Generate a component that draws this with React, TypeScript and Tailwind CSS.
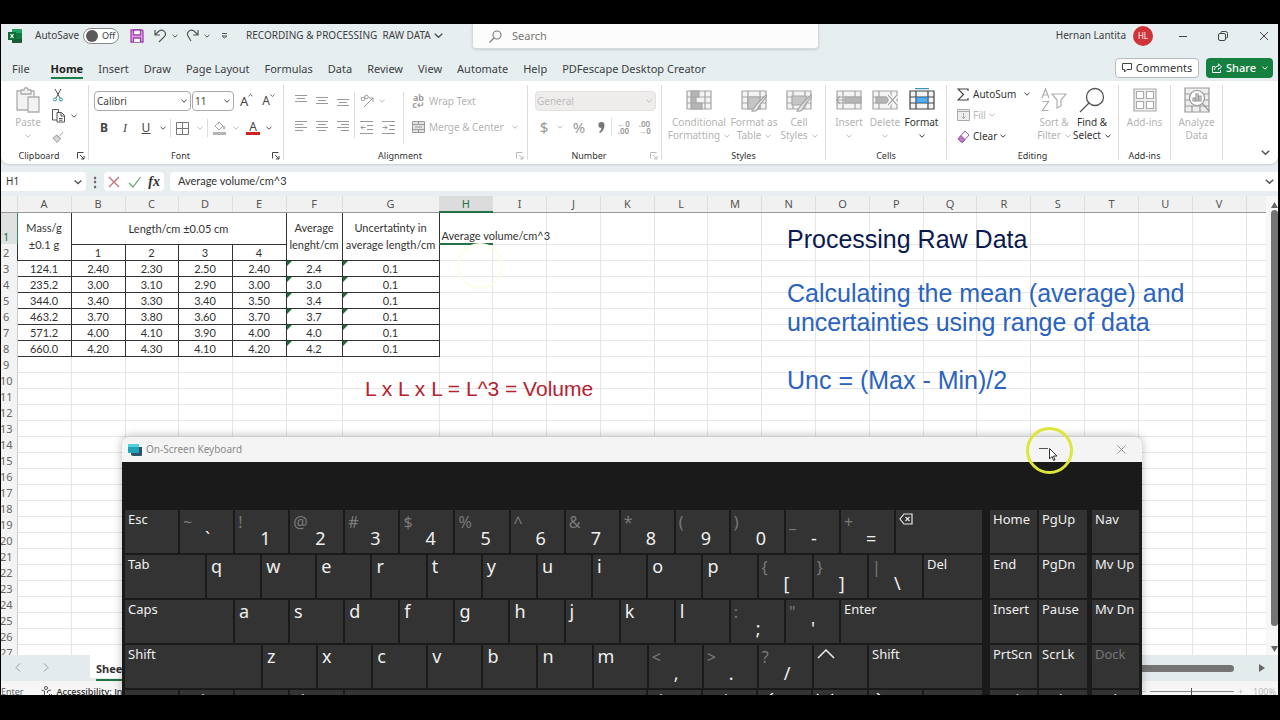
import { useState, type ReactNode } from 'react';
import { clsx } from 'clsx';

// Menu and sheet data
const tabs = ['File', 'Home', 'Insert', 'Draw', 'Page Layout', 'Formulas', 'Data', 'Review', 'View', 'Automate', 'Help', 'PDFescape Desktop Creator'];

const columns = [
  { id: 'A', width: 'w-[54px]' },
  { id: 'B', width: 'w-[54px]' },
  { id: 'C', width: 'w-[53px]' },
  { id: 'D', width: 'w-[54px]' },
  { id: 'E', width: 'w-[54px]' },
  { id: 'F', width: 'w-[56px]' },
  { id: 'G', width: 'w-[97px]' },
  ...'HIJKLMNOPQRSTUV'.split('').map(id => ({ id, width: '' })),
];

const measurements = [
  ['124.1', '2.40', '2.30', '2.50', '2.40', '2.4', '0.1'],
  ['235.2', '3.00', '3.10', '2.90', '3.00', '3.0', '0.1'],
  ['344.0', '3.40', '3.30', '3.40', '3.50', '3.4', '0.1'],
  ['463.2', '3.70', '3.80', '3.60', '3.70', '3.7', '0.1'],
  ['571.2', '4.00', '4.10', '3.90', '4.00', '4.0', '0.1'],
  ['660.0', '4.20', '4.30', '4.10', '4.20', '4.2', '0.1'],
];

const freeColumns = columns.slice(7);
const emptyRows = Array.from({ length: 19 }, (_, i) => i + 9);

// Keyboard data
type KeyDef = { main?: string; shift?: string; label?: string; icon?: ReactNode; width?: string; dim?: boolean; name?: string };

const letters = (text: string): KeyDef[] => text.split('').map(main => ({ main }));

const ArrowIcon = ({ d }: { d: string }) => (
  <svg width="18" height="12" viewBox="0 0 18 12" fill="none" stroke="#f0f0f0" strokeWidth="1.5">
    <path d={d} />
  </svg>
);

const BackspaceIcon = () => (
  <svg width="14" height="12" viewBox="0 0 14 12" fill="none" stroke="#e8e8e8" strokeWidth="1.2">
    <path d="M5 1h8v10H5L1 6zM6.5 4l4 4M10.5 4l-4 4" />
  </svg>
);

const keyRows: KeyDef[][] = [
  [
    { label: 'Esc' },
    { shift: '~', main: '`' },
    { shift: '!', main: '1' },
    { shift: '@', main: '2' },
    { shift: '#', main: '3' },
    { shift: '$', main: '4' },
    { shift: '%', main: '5' },
    { shift: '^', main: '6' },
    { shift: '&', main: '7' },
    { shift: '*', main: '8' },
    { shift: '(', main: '9' },
    { shift: ')', main: '0' },
    { shift: '_', main: '-' },
    { shift: '+', main: '=' },
    { icon: <BackspaceIcon />, name: 'Backspace', width: 'w-[86px]' },
  ],
  [
    { label: 'Tab', width: 'w-[80px]' },
    ...letters('qwertyuiop'),
    { shift: '{', main: '[' },
    { shift: '}', main: ']' },
    { shift: '|', main: '\\' },
    { label: 'Del', width: 'w-[58px]' },
  ],
  [
    { label: 'Caps', width: 'w-[108px]' },
    ...letters('asdfghjkl'),
    { shift: ':', main: ';' },
    { shift: '"', main: "'" },
    { label: 'Enter', width: 'w-[141px]' },
  ],
  [
    { label: 'Shift', width: 'w-[136px]' },
    ...letters('zxcvbnm'),
    { shift: '<', main: ',' },
    { shift: '>', main: '.' },
    { shift: '?', main: '/' },
    { icon: <ArrowIcon d="M1 10l8-8 8 8" />, name: 'Up' },
    { label: 'Shift', width: 'w-[113px]' },
  ],
  [
    { label: 'Fn', width: 'w-[53px]' },
    { label: 'Ctrl', width: 'w-[53px]' },
    { name: 'Windows', width: 'w-[53px]' },
    { label: 'Alt', width: 'w-[53px]' },
    { name: 'Space' },
    { label: 'Alt', width: 'w-[53px]' },
    { label: 'Ctrl', width: 'w-[53px]' },
    { icon: <ArrowIcon d="M12 0L5 6l7 6" />, name: 'Left', width: 'w-[53px]' },
    { icon: <ArrowIcon d="M1 1l8 8 8-8" />, name: 'Down', width: 'w-[54px]' },
    { icon: <ArrowIcon d="M5 0l7 6-7 6" />, name: 'Right', width: 'w-[53px]' },
    { name: 'Menu', width: 'w-[58px]' },
  ],
];

const sideRows = [
  ['Home', 'PgUp', 'Nav'],
  ['End', 'PgDn', 'Mv Up'],
  ['Insert', 'Pause', 'Mv Dn'],
  ['PrtScn', 'ScrLk', 'Dock'],
  ['Options', 'Help', 'Fade'],
];

// Small building blocks
function Chevron({ className = 'text-[#555]', size = 6 }: { className?: string; size?: number }) {
  return (
    <svg className={clsx('shrink-0', className)} width={size} height={size} viewBox="0 0 6 6" fill="none" stroke="currentColor">
      <path d="M0.5 1.8L3 4.2L5.5 1.8" />
    </svg>
  );
}

function IconButton({ name, className, children }: { name: string; className?: string; children?: ReactNode }) {
  return (
    <button type="button" aria-label={name} className={clsx('flex h-[18px] shrink-0 items-center justify-center', className)}>
      {children}
    </button>
  );
}

function Group({ title, launcher, width, children }: { title?: string; launcher?: 'on' | 'off'; width: string; children: ReactNode }) {
  return (
    <>
      <section className={clsx('flex shrink-0 flex-col', width)}>
        <div className="flex h-[67px] pt-[3px]">{children}</div>
        <div className="flex h-4 items-center">
          <span className="flex-1 text-center text-[9px] leading-3 whitespace-nowrap text-[#333]">{title}</span>
          {launcher && (
            <button type="button" aria-label={`${title} settings`} className={clsx('w-[11px]', launcher === 'on' ? 'text-[#444]' : 'text-[#bbb]')}>
              <svg width="8" height="8" viewBox="0 0 8 8" fill="none" stroke="currentColor">
                <path d="M0.5 6.5V0.5H6.5M3 3l4 4M7 4v3H4" />
              </svg>
            </button>
          )}
        </div>
      </section>
      <div className="my-1 w-px shrink-0 bg-[#dcdcdc]" />
    </>
  );
}

function BigButton({ lines, chevron, active, width, children }: { lines: string[]; chevron?: boolean; active?: boolean; width: string; children: ReactNode }) {
  return (
    <button type="button" className={clsx('flex shrink-0 flex-col items-center pt-[2px] text-[10px] leading-[13px]', width, active ? 'text-[#333]' : 'text-[#b4b4b4]')}>
      <span className="flex h-7 items-center justify-center">{children}</span>
      <span className="pt-[2px] whitespace-nowrap">{lines[0]}</span>
      <span className="flex h-[13px] items-center gap-1 whitespace-nowrap">
        {lines[1]}
        {chevron && <Chevron className={active ? 'text-[#333]' : 'text-[#bbb]'} />}
      </span>
    </button>
  );
}

function Lines({ rows, y = 0 }: { rows: number[][]; y?: number }) {
  return (
    <svg width="12" height="14" viewBox="0 0 12 14" stroke="#9a9a9a">
      {rows.map(([from, to], i) => (
        <path key={i} d={`M${from} ${y + i * 3 + 0.5}H${to}`} />
      ))}
    </svg>
  );
}

function GridIcon({ children, stroke = '#a5a5a5' }: { children?: ReactNode; stroke?: string }) {
  return (
    <svg width="26" height="24" viewBox="0 0 26 24" fill="none" stroke={stroke} strokeWidth="1.2">
      <path fill="#f3f3f3" d="M1 3H25V21H1z" />
      <path d="M1 9H25M1 15H25M7 3V21M19 3V21" />
      {children}
    </svg>
  );
}

function TitleBar() {
  const [autoSave, setAutoSave] = useState(false);

  return (
    <div className="flex h-[23px] shrink-0 items-center text-[11px] text-[#3c4043]">
      <div className="flex w-[471px] shrink-0 items-center pl-[7px]">
        <svg width="14" height="14" viewBox="0 0 14 14">
          <path fill="#21a366" d="M4 0h9a1 1 0 011 1v12a1 1 0 01-1 1H4z" />
          <path fill="#107c41" d="M4 4h10v6H4z" />
          <path fill="#185c37" d="M4 10h10v3a1 1 0 01-1 1H4z" />
          <path fill="#0f6b37" d="M0 3h8v8H0z" />
          <path stroke="#fff" strokeWidth="1.2" d="M2.5 5l3 4M5.5 5l-3 4" />
        </svg>
        <label className="ml-[13px] flex items-center gap-[4px] text-[10px]">
          AutoSave
          <input type="checkbox" className="sr-only" checked={autoSave} onChange={e => setAutoSave(e.target.checked)} />
          <span className="flex h-4 w-9 items-center gap-1 rounded-full border border-[#888] bg-white pl-[2px] text-[9px]">
            <span className="size-3 rounded-full bg-[#5a5a5a]" />
            {autoSave ? 'On' : 'Off'}
          </span>
        </label>
        <IconButton name="Save" className="ml-[11px]">
          <svg width="14" height="14" viewBox="0 0 14 14" fill="none" stroke="#a13fae" strokeWidth="1.3">
            <path fill="#dba5e2" d="M1 1h11l1 1v11H1z" />
            <path fill="#fff" d="M3.500 1h7v5h-7zM3.500 13V9h7v4" />
          </svg>
        </IconButton>
        <IconButton name="Undo" className="ml-[10px] gap-[5px]">
          <svg width="13" height="14" viewBox="0 0 13 14" fill="none" stroke="#555" strokeWidth="1.200">
            <path d="M1 1v5h5M1 6l4-4a4 4 0 016 5l-6 6" />
          </svg>
          <Chevron />
        </IconButton>
        <IconButton name="Redo" className="ml-[8px] gap-[5px]">
          <svg width="13" height="14" viewBox="0 0 13 14" fill="none" stroke="#555" strokeWidth="1.200">
            <path d="M12 1v5H7M12 6L8 2a4 4 0 00-6 5l3 5" />
          </svg>
          <Chevron />
        </IconButton>
        <IconButton name="Customize toolbar" className="ml-[11px]">
          <svg width="7" height="7" viewBox="0 0 7 7" fill="none" stroke="#555">
            <path d="M1 1.500h5M1 4l2.500 2L6 4z" />
          </svg>
        </IconButton>
        <button type="button" className="ml-[18px] flex items-center gap-[3px] text-[10px] whitespace-pre">
          RECORDING &amp; PROCESSING  RAW DATA
          <Chevron size={9} />
        </button>
      </div>
      <label className="flex h-[25px] flex-1 items-center gap-[10px] self-start rounded-b border border-t-0 border-[#d5dadb] bg-[#fdfcfd] pl-4 shadow-sm">
        <svg width="13" height="13" viewBox="0 0 13 13" fill="none" stroke="#777" strokeWidth="1.100">
          <circle cx="8" cy="5" r="4" />
          <path d="M5 8l-4.500 4.500" />
        </svg>
        <input type="text" placeholder="Search" aria-label="Search" className="min-w-0 flex-1 bg-transparent text-[11px] outline-none placeholder:text-[#777]" />
      </label>
      <div className="flex w-[459px] shrink-0 items-center justify-end pr-[9px]">
        <span className="text-[10px]">Hernan Lantita</span>
        <span className="ml-[7px] flex size-5 items-center justify-center rounded-full bg-[#cf3438] text-[8px] text-white">HL</span>
        <IconButton name="Minimize" className="ml-[25px]">
          <svg width="10" height="10" viewBox="0 0 10 10" stroke="#444"><path d="M1 5.500h8" /></svg>
        </IconButton>
        <IconButton name="Restore" className="ml-[30px]">
          <svg width="10" height="10" viewBox="0 0 10 10" fill="none" stroke="#444">
            <path d="M3 2.500V1.500a1 1 0 011-1h3.500a2 2 0 012 2V6a1 1 0 01-1 1H8" />
            <rect x="0.500" y="2.500" width="7" height="7" rx="1.500" />
          </svg>
        </IconButton>
        <IconButton name="Close" className="ml-[31px]">
          <svg width="10" height="10" viewBox="0 0 10 10" stroke="#444"><path d="M1 1l8 8M9 1L1 9" /></svg>
        </IconButton>
      </div>
    </div>
  );
}

function TabRow() {
  const [activeTab, setActiveTab] = useState('Home');

  return (
    <div className="flex h-[34px] shrink-0 items-start justify-between pt-[11px] pl-[11px]">
      <nav className="flex gap-[15px] text-[11px] text-[#3c4043]">
        {tabs.map(tab => (
          <button
            key={tab}
            type="button"
            onClick={() => setActiveTab(tab)}
            className={clsx(
              'h-[21px] border-b-2 pt-[2px] leading-[17px] whitespace-nowrap first:mr-[6px]',
              tab === activeTab ? 'border-[#1a7f46] font-bold text-[#222]' : 'border-transparent',
            )}
          >
            {tab}
          </button>
        ))}
      </nav>
      <div className="flex gap-[7px] pr-[5px] text-[11px]">
        <button type="button" className="flex h-5 w-[84px] items-center justify-center gap-1 rounded border border-[#bbb] bg-white text-[#333]">
          <svg width="10" height="10" viewBox="0 0 10 10" fill="none" stroke="#444">
            <path d="M0.500 0.500h9v6H5L2.500 9V6.500h-2z" />
          </svg>
          Comments
        </button>
        <button type="button" className="flex h-5 w-[67px] items-center gap-1 rounded bg-[#15803f] pl-[6px] text-white">
          <svg width="10" height="10" viewBox="0 0 10 10" fill="none" stroke="#fff">
            <path d="M3 3.500H0.500v6h8V7M2.500 7c0-3 2-4 4-4V0.800L9.500 4 6.500 6.500V5" />
          </svg>
          <span className="flex-1 text-left font-medium">Share</span>
          <Chevron className="mr-[5px] text-white" />
        </button>
      </div>
    </div>
  );
}

function ClipboardGroup() {
  return (
    <Group title="Clipboard" launcher="on" width="w-[87px]">
      <BigButton lines={['Paste', '']} chevron width="w-[54px]">
        <svg width="24" height="26" viewBox="0 0 24 26" fill="#f3f3f3" stroke="#adadad" strokeWidth="1.300">
          <path d="M1 4h17v19H1z" />
          <path d="M5 3h3c0-3 4-3 4 0h3v4H5z" />
          <path d="M12 10h11v15H12z" />
        </svg>
      </BigButton>
      <div className="-ml-[3px] flex flex-col gap-[3px] pt-[2px] text-[#666]">
        <IconButton name="Cut" className="w-3">
          <svg width="10" height="14" viewBox="0 0 10 14" fill="none" stroke="#555">
            <path d="M2 1l5 9M8 1l-5 9" />
            <circle cx="2" cy="11.500" r="1.500" stroke="#2a9d9d" />
            <circle cx="8" cy="11.500" r="1.500" stroke="#2a9d9d" />
          </svg>
        </IconButton>
        <IconButton name="Copy" className="gap-[6px]">
          <svg width="13" height="14" viewBox="0 0 13 14" fill="#fff" stroke="#555">
            <path d="M5 11H0.500V0.500h6V3" />
            <path d="M5 3.500h4.500l3 3V13H5zM9 3.500V7h3.500M7 9.500h3.500M7 11.200h3.500" />
          </svg>
          <Chevron />
        </IconButton>
        <IconButton name="Format painter" className="w-3">
          <svg width="13" height="13" viewBox="0 0 13 13" fill="#d5d5d5" stroke="#999">
            <path d="M12 1L8 4.500M5 3.500l4.500 4.500M5 4L1 7l4.500 5L9 8z" />
          </svg>
        </IconButton>
      </div>
    </Group>
  );
}

function FontGroup() {
  return (
    <Group title="Font" launcher="on" width="w-[194px]">
      <div className="flex flex-1 flex-col gap-2 pt-[7px] pl-[5px] text-[#444]">
        <div className="flex items-center">
          <span className="relative flex">
            <select aria-label="Font name" className="h-5 w-[97px] appearance-none rounded border border-[#aaa] bg-white pl-[2px] text-[10px]">
              <option>Calibri</option>
            </select>
            <Chevron className="pointer-events-none absolute top-[7px] right-1 text-[#444]" />
          </span>
          <span className="relative ml-px flex">
            <select aria-label="Font size" className="h-5 w-[42px] appearance-none rounded border border-[#aaa] bg-white pl-[2px] text-[10px]">
              <option>11</option>
            </select>
            <Chevron className="pointer-events-none absolute top-[7px] right-1 text-[#444]" />
          </span>
          <button type="button" className="ml-[6px] flex text-[13px] leading-4" aria-label="Grow font">
            A<svg width="5" height="5" viewBox="0 0 6 6" fill="none" stroke="#444"><path d="M0.500 4L3 1.500 5.500 4" /></svg>
          </button>
          <button type="button" className="ml-[9px] flex text-[12px] leading-4" aria-label="Shrink font">
            A<Chevron size={5} />
          </button>
        </div>
        <div className="flex items-center text-[12px]">
          <IconButton name="Bold" className="w-5 font-bold">B</IconButton>
          <IconButton name="Italic" className="w-[22px] font-['Liberation_Serif',serif] italic">I</IconButton>
          <IconButton name="Underline" className="w-5 underline">U</IconButton>
          <IconButton name="Underline style" className="w-[14px]"><Chevron /></IconButton>
          <div className="h-[18px] w-px bg-[#ddd]" />
          <IconButton name="Borders" className="w-[22px]">
            <svg width="13" height="13" viewBox="0 0 13 13" fill="none" stroke="#777"><path d="M0.500 0.500h12v12H0.500zM6.500 0.500v12M0.500 6.500h12" /></svg>
          </IconButton>
          <IconButton name="Border style" className="w-[14px]"><Chevron className="text-[#bbb]" /></IconButton>
          <div className="h-[18px] w-px bg-[#ddd]" />
          <IconButton name="Fill color" className="w-[23px]">
            <svg width="13" height="14" viewBox="0 0 13 14" fill="none" stroke="#a5a5a5">
              <path d="M6 1l4 4-4 4-4-4zM6 1L5 3M11 5c1.500 2 1 3 0 3s-1-1 0-3" />
              <path fill="#b5b5b5" stroke="none" d="M0 11h13v3H0z" />
            </svg>
          </IconButton>
          <IconButton name="Fill color menu" className="w-[9px]"><Chevron className="text-[#bbb]" /></IconButton>
          <IconButton name="Font color" className="w-[26px] flex-col text-[12px] leading-[11px]">
            A
            <span className="h-[3px] w-[14px] bg-[#d02224]" />
          </IconButton>
          <IconButton name="Font color menu" className="w-[6px]"><Chevron /></IconButton>
        </div>
      </div>
    </Group>
  );
}

function AlignmentGroup() {
  return (
    <Group title="Alignment" launcher="off" width="w-[243px]">
      <div className="flex flex-1 gap-[5px] pt-2 pl-[11px] text-[10px] text-[#b4b4b4]">
        <div className="grid grid-cols-3 content-start gap-x-[9px] gap-y-2">
          <IconButton name="Top align"><Lines y={1} rows={[[0, 12], [2, 10], [0, 12]]} /></IconButton>
          <IconButton name="Middle align"><Lines y={3} rows={[[0, 12], [2, 10], [0, 12]]} /></IconButton>
          <IconButton name="Bottom align"><Lines y={5} rows={[[0, 12], [2, 10], [0, 12]]} /></IconButton>
          <IconButton name="Align left"><Lines y={1} rows={[[0, 12], [0, 8], [0, 12], [0, 8]]} /></IconButton>
          <IconButton name="Center"><Lines y={1} rows={[[0, 12], [2, 10], [0, 12], [2, 10]]} /></IconButton>
          <IconButton name="Align right"><Lines y={1} rows={[[0, 12], [4, 12], [0, 12], [4, 12]]} /></IconButton>
        </div>
        <div className="mb-[10px] w-px bg-[#ddd]" />
        <div className="flex w-[38px] flex-col gap-2">
          <IconButton name="Orientation" className="gap-1 self-start">
            <svg width="15" height="14" viewBox="0 0 15 14" fill="none" stroke="#9a9a9a">
              <path d="M4 13L13 4M13 8V4H9" />
              <circle cx="3" cy="5" r="1.800" />
              <circle cx="6.500" cy="3" r="1.800" />
            </svg>
            <Chevron className="text-[#bbb]" />
          </IconButton>
          <div className="flex gap-[9px]">
            <IconButton name="Decrease indent">
              <svg width="13" height="13" viewBox="0 0 13 13" fill="none" stroke="#9a9a9a"><path d="M0 0.500h13M7 4.500h6M7 8.500h6M0 12.500h13M5.500 6.500H1M3 4.500l-2 2 2 2" /></svg>
            </IconButton>
            <IconButton name="Increase indent">
              <svg width="13" height="13" viewBox="0 0 13 13" fill="none" stroke="#9a9a9a"><path d="M0 0.500h13M7 4.500h6M7 8.500h6M0 12.500h13M0.500 6.500H5M3 4.500l2 2-2 2" /></svg>
            </IconButton>
          </div>
        </div>
        <div className="mb-[4px] w-px bg-[#ddd]" />
        <div className="flex flex-col gap-2 pl-[3px]">
          <button type="button" className="flex h-[18px] items-center gap-1">
            <span className="w-[13px] text-[9px] leading-[7px] font-bold text-[#a0a0a0]">ab c↵</span>
            Wrap Text
          </button>
          <button type="button" className="flex h-[18px] items-center gap-1 whitespace-nowrap">
            <svg width="13" height="12" viewBox="0 0 13 12" fill="#e4e4e4" stroke="#9a9a9a"><path d="M0.500 0.500h12v11H0.500zM0.500 3.500h12M0.500 8.500h12M3 6h7M6.500 0v3.500M6.500 8.500V12" /></svg>
            Merge &amp; Center
            <Chevron className="ml-1 text-[#bbb]" />
          </button>
        </div>
      </div>
    </Group>
  );
}

function NumberGroup() {
  return (
    <Group title="Number" launcher="off" width="w-[133px]">
      <div className="flex flex-1 flex-col gap-[7px] pt-[7px] pl-[7px] text-[#999]">
        <span className="relative flex">
          <select disabled aria-label="Number format" className="h-5 w-[121px] appearance-none rounded border border-[#e4e0e0] bg-[#efecec] pl-[1px] text-[10px] text-[#bdbdbd] opacity-100">
            <option>General</option>
          </select>
          <Chevron className="pointer-events-none absolute top-[7px] right-[9px] text-[#bbb]" />
        </span>
        <div className="flex items-center text-[15px]">
          <IconButton name="Currency" className="w-[18px]">$</IconButton>
          <IconButton name="Currency menu" className="w-[14px]"><Chevron className="text-[#bbb]" /></IconButton>
          <IconButton name="Percent" className="w-6">%</IconButton>
          <IconButton name="Comma style" className="w-5">
            <svg width="7" height="11" viewBox="0 0 7 11" fill="#777"><path d="M3.500 0a3 3 0 013 3c0 4-2 6.500-4.500 8l-1-1c1.500-1 2.300-2.500 2.300-4A3 3 0 013.500 0" /></svg>
          </IconButton>
          <div className="h-[18px] w-px bg-[#ddd]" />
          <IconButton name="Increase decimal" className="w-[23px] text-[8px] leading-[7px] font-semibold">←0<br />.00</IconButton>
          <IconButton name="Decrease decimal" className="w-[19px] text-[8px] leading-[7px] font-semibold">.00<br />→0</IconButton>
        </div>
      </div>
    </Group>
  );
}

function StylesGroup() {
  return (
    <Group title="Styles" width="w-[163px]">
      <div className="flex flex-1 pl-[7px]">
        <BigButton lines={['Conditional', 'Formatting']} chevron width="w-[60px]">
          <GridIcon><path fill="#b5b5b5" d="M5 3h8v6H5zM5 9h5v6H5zM5 15h11v6H5z" /></GridIcon>
        </BigButton>
        <BigButton lines={['Format as', 'Table']} chevron width="w-[50px]">
          <GridIcon><path fill="#c5c5c5" d="M7 9h12v12H7z" /><path fill="#e8e8e8" d="M25 7l-9 9-5 7c4 1 6-1 7-5l8-10z" /></GridIcon>
        </BigButton>
        <BigButton lines={['Cell', 'Styles']} chevron width="w-[40px]">
          <GridIcon><path fill="#c5c5c5" d="M6 8h14v9H6z" /><path fill="#e8e8e8" d="M25 7l-9 9-5 7c4 1 6-1 7-5l8-10z" /></GridIcon>
        </BigButton>
      </div>
    </Group>
  );
}

function CellsGroup() {
  return (
    <Group title="Cells" width="w-[120px]">
      <div className="flex flex-1 pl-[5px]">
        <BigButton lines={['Insert', '']} chevron width="w-[36px]">
          <GridIcon><path fill="#b5b5b5" d="M9 9h16v6H9z" /><path d="M9 12H1M4 8.500L0.500 12 4 15.500" /></GridIcon>
        </BigButton>
        <BigButton lines={['Delete', '']} chevron width="w-[36px]">
          <GridIcon><path fill="#b5b5b5" d="M4 9h12v6H4z" /><path stroke="#fff" strokeWidth="4" d="M16 7l9 10M25 7l-9 10" /><path d="M16 7l9 10M25 7l-9 10" /></GridIcon>
        </BigButton>
        <BigButton lines={['Format', '']} chevron active width="w-[37px]">
          <GridIcon stroke="#444"><path fill="#5aaee8" stroke="#2b88d8" d="M7.500 9.500h11v5h-11z" /><path stroke="#3a94b8" d="M6 0.600h14" /></GridIcon>
        </BigButton>
      </div>
    </Group>
  );
}

function EditingGroup() {
  return (
    <Group title="Editing" width="w-[171px]">
      <div className="flex flex-1 pl-[10px]">
        <div className="flex w-[79px] flex-col gap-[3px] pt-px text-[10px] text-[#333]">
          <button type="button" className="flex h-[18px] items-center gap-[3px]">
            <svg width="13" height="13" viewBox="0 0 13 13" fill="none" stroke="#444" strokeWidth="1.200"><path d="M11 3V1H1l5.500 5.500L1 12h10v-2" /></svg>
            AutoSum
            <Chevron className="ml-[5px] text-[#444]" />
          </button>
          <button type="button" className="flex h-[18px] items-center gap-[3px] text-[#bbb]">
            <svg width="13" height="12" viewBox="0 0 13 12" fill="#eee" stroke="#aaa"><path d="M0.500 0.500h12v11H0.500zM0.500 2.500h12M6.500 4v5M4.500 7.500l2 2 2-2" /></svg>
            Fill
            <Chevron className="text-[#bbb]" />
          </button>
          <button type="button" className="flex h-[18px] items-center gap-[3px]">
            <svg width="13" height="13" viewBox="0 0 13 13" fill="#fff" stroke="#9b59a8"><path d="M8 1l4 4-6 7H4L1 9z" /><path fill="#b77fc2" d="M4 5.500L1 9l3 3h2l2-2.500z" /></svg>
            Clear
            <Chevron className="text-[#444]" />
          </button>
        </div>
        <BigButton lines={['Sort &', 'Filter']} chevron width="w-[36px]">
          <svg width="26" height="26" viewBox="0 0 26 26" fill="none" stroke="#b0b0b0" strokeWidth="1.200">
            <path d="M1 11L4.500 2 8 11M2.500 8h4M1.500 14.500h6l-6 9h6M11 7h14l-5 6v6l-4 2v-8z" />
          </svg>
        </BigButton>
        <BigButton lines={['Find &', 'Select']} chevron active width="w-[40px]">
          <svg width="26" height="26" viewBox="0 0 26 26" fill="none" stroke="#555" strokeWidth="1.300">
            <circle cx="16" cy="10" r="8.500" />
            <path d="M10 16l-9 9" />
          </svg>
        </BigButton>
      </div>
    </Group>
  );
}

function Ribbon() {
  return (
    <div className="flex h-[83px] shrink-0 rounded-b-lg bg-white shadow-[0_1px_2px_#c5cccd]">
      <ClipboardGroup />
      <FontGroup />
      <AlignmentGroup />
      <NumberGroup />
      <StylesGroup />
      <CellsGroup />
      <EditingGroup />
      <Group title="Add-ins" width="w-[51px]">
        <BigButton lines={['Add-ins']} width="w-full">
          <svg width="24" height="24" viewBox="0 0 24 24" fill="#fff" stroke="#aaa" strokeWidth="1.200">
            <path fill="#f0f0f0" d="M1 1h22v22H1z" />
            <path d="M3.500 3.500h7v7h-7zM13.500 3.500h7v7h-7zM3.500 13.500h7v7h-7zM13.500 13.500h7v7h-7z" />
          </svg>
        </BigButton>
      </Group>
      <Group width="w-[51px]">
        <BigButton lines={['Analyze', 'Data']} width="w-full">
          <svg width="26" height="26" viewBox="0 0 26 26" fill="#eee" stroke="#999" strokeWidth="1.200">
            <path d="M1 1h24v24H1zM1 7h24M1 19h24M8 19v6M16 19v6M1 13h24" />
            <circle cx="13" cy="11" r="7.500" fill="#fff" />
            <path d="M9 14v-3h2v3zM12 14V7h2v7zM15 14V9h2v5zM18.500 16.500L25 24" />
          </svg>
        </BigButton>
      </Group>
      <div className="flex flex-1 items-end justify-end pr-2 pb-[7px]">
        <button type="button" aria-label="Collapse ribbon"><Chevron size={9} /></button>
      </div>
    </div>
  );
}

function FormulaBar() {
  const [formula, setFormula] = useState('Average volume/cm^3');

  return (
    <div className="flex h-8 shrink-0 items-start pt-2 text-[10px] text-[#333]">
      <label className="flex h-[19px] w-[85px] items-center rounded-r bg-white pr-1 pl-[5px]">
        <input aria-label="Name box" defaultValue="H1" className="w-0 flex-1 bg-transparent outline-none" />
        <Chevron size={8} />
      </label>
      <span className="w-[18px] text-center text-[12px] leading-[19px] font-bold text-[#555]">⋮</span>
      <div className="flex h-[19px] w-[60px] items-center justify-between rounded bg-white px-1">
        <IconButton name="Cancel">
          <svg width="12" height="12" viewBox="0 0 12 12" stroke="#c66a78" strokeWidth="1.200"><path d="M1 1l10 10M11 1L1 11" /></svg>
        </IconButton>
        <IconButton name="Enter">
          <svg width="13" height="12" viewBox="0 0 13 12" fill="none" stroke="#6da36d" strokeWidth="1.200"><path d="M1 7l4 4 7.500-10" /></svg>
        </IconButton>
        <IconButton name="Insert function" className="font-['Liberation_Serif',serif] text-[14px] font-bold italic">fx</IconButton>
      </div>
      <label className="ml-[6px] flex h-[19px] flex-1 items-center rounded-l bg-white pr-1 pl-2">
        <input aria-label="Formula" value={formula} onChange={e => setFormula(e.target.value)} className="w-0 flex-1 bg-transparent font-['Lato',sans-serif] text-[11px] outline-none" />
        <Chevron size={9} />
      </label>
    </div>
  );
}

function RowHeader({ n, active }: { n: number; active?: boolean }) {
  return (
    <th
      scope="row"
      className={clsx(
        "border-r border-[#d0d0d0] pr-[5px] pl-0 align-bottom font-['Noto_Sans',sans-serif] text-[11px] leading-[15px] font-normal",
        active ? 'border-r-[#3f7f62] bg-[#dfe1e1] text-[#217346]' : 'bg-[#f3f3f3] text-[#666]',
      )}
    >
      <span className="flex justify-center">{n}</span>
    </th>
  );
}

function EmptyCells({ from = 0 }: { from?: number }) {
  return (
    <>
      {columns.slice(from).map(col => (
        <td key={col.id} className="border border-[#e6e6e6]" />
      ))}
      <td className="border border-r-0 border-[#e6e6e6]" />
    </>
  );
}

const inked = 'border border-[#333] text-center';

function Worksheet() {
  return (
    <div className="relative flex min-h-0 flex-1 bg-white">
      <div className="min-w-0 flex-1 overflow-hidden">
        <table className="w-full table-fixed border-collapse font-['Lato',sans-serif] text-[11px] leading-[15px] text-[#333]">
          <thead>
            <tr className="h-4 bg-[#f1f1f1] font-['Noto_Sans',sans-serif] text-[11px] text-[#555]">
              <th aria-label="Select all" className="w-4 border-b border-[#999] p-0" />
              {columns.map(col => (
                <th
                  key={col.id}
                  scope="col"
                  className={clsx('border-x border-b border-x-[#dedede] border-b-[#999] p-0 font-normal', col.width, col.id === 'H' && 'border-b-2 border-b-[#217346] bg-[#dcdcdc] text-[#217346]')}
                >
                  {col.id}
                </th>
              ))}
              <th className="w-5 border-b border-[#999] p-0" />
            </tr>
          </thead>
          <tbody>
            <tr className="h-8">
              <RowHeader n={1} active />
              <td rowSpan={2} className={clsx(inked, 'leading-[17px]')}>Mass/g<br />±0.1 g</td>
              <td colSpan={4} className={inked}>Length/cm ±0.05 cm</td>
              <td rowSpan={2} className={clsx(inked, 'leading-[17px] whitespace-nowrap')}>Average<br />lenght/cm</td>
              <td rowSpan={2} className={clsx(inked, 'leading-[17px] whitespace-nowrap')}>Uncertatinty in<br />average length/cm</td>
              <td className="border-b-2 border-b-[#217346] pl-[2px] align-bottom whitespace-nowrap">Average volume/cm^3</td>
              {freeColumns.slice(1).map(col => (
                <td key={col.id} className={clsx('border-b border-[#e6e6e6]', col.id !== 'I' && 'border-l')} />
              ))}
              <td className="border-b border-l border-[#e6e6e6]" />
            </tr>
            <tr className="h-4">
              <RowHeader n={2} />
              {[1, 2, 3, 4].map(n => (
                <td key={n} className={inked}>{n}</td>
              ))}
              <EmptyCells from={7} />
            </tr>
            {measurements.map((row, r) => (
              <tr key={r} className="h-4">
                <RowHeader n={r + 3} />
                {row.map((value, c) => (
                  <td key={c} className={clsx(inked, 'relative p-0')}>
                    {c > 4 && (
                      <svg className="absolute top-0 left-0" width="5" height="5" viewBox="0 0 5 5" fill="#1c6b3a"><path d="M0 0h5L0 5z" /></svg>
                    )}
                    {value}
                  </td>
                ))}
                <EmptyCells from={7} />
              </tr>
            ))}
            {emptyRows.map(n => (
              <tr key={n} className="h-4">
                <RowHeader n={n} />
                <EmptyCells />
              </tr>
            ))}
          </tbody>
        </table>
      </div>

      {/* Vertical scroll bar */}
      <div className="flex w-3 shrink-0 flex-col items-end bg-[#f7f7f7]">
        <button type="button" aria-label="Scroll up" className="h-[14px] pt-1">
          <svg width="7" height="6" viewBox="0 0 7 6" fill="#666"><path d="M0 6L3.500 0 7 6z" /></svg>
        </button>
        <div className="w-[7px] flex-1 rounded-full bg-[#747474]" />
        <button type="button" aria-label="Scroll down" className="h-[29px] pt-[17px]">
          <svg width="7" height="6" viewBox="0 0 7 6" fill="#666"><path d="M0 0h7L3.500 6z" /></svg>
        </button>
      </div>

      {/* Text boxes floating over the cells */}
      <div className="absolute top-[29px] left-[786px] font-['Liberation_Sans',sans-serif] text-[25px] leading-[29px] whitespace-nowrap text-[#2a63c0]">
        <p className="text-[#0a1a4f]">Processing Raw Data</p>
        <p className="mt-[25px]">Calculating the mean (average) and<br />uncertainties using range of data</p>
        <p className="mt-[29px]">Unc = (Max - Min)/2</p>
      </div>
      <p className="absolute top-[181px] left-[364px] font-['Liberation_Sans',sans-serif] text-[21px] leading-6 whitespace-nowrap text-[#b52230]">
        L x L x L = L^3 = Volume
      </p>
      <div className="absolute top-[47px] left-[456px] size-[46px] rounded-full border-2 border-[#fdfdec]" />
    </div>
  );
}

function SheetBar() {
  return (
    <div className="flex h-[28px] shrink-0 items-start border-b-2 border-[#f4f4f4] bg-[#e3ebec]">
      <div className="flex h-[25px] w-[89px] items-center gap-[22px] pl-[14px] text-[#999]">
        <button type="button" aria-label="Previous sheet">
          <svg width="6" height="9" viewBox="0 0 6 9" fill="none" stroke="currentColor"><path d="M5 0.500l-4 4 4 4" /></svg>
        </button>
        <button type="button" aria-label="Next sheet">
          <svg width="6" height="9" viewBox="0 0 6 9" fill="none" stroke="currentColor"><path d="M1 0.500l4 4-4 4" /></svg>
        </button>
      </div>
      <div className="h-[23px] bg-white px-[6px]">
        <button type="button" className="h-[21px] border-b-2 border-[#217346] text-[11px] font-bold text-[#333]">Sheet1</button>
      </div>
      <div className="flex flex-1 items-center self-center pr-[13px] pl-[500px]">
        <div className="mr-[25px] h-[7px] flex-1 rounded-full bg-[#747474]" />
        <button type="button" aria-label="Scroll right">
          <svg width="6" height="8" viewBox="0 0 6 8" fill="#666"><path d="M0 0l6 4-6 4z" /></svg>
        </button>
      </div>
    </div>
  );
}

function StatusBar() {
  return (
    <div className="flex h-3 shrink-0 items-start justify-between overflow-hidden bg-[#f6f6f6] text-[9px] leading-[17px] text-[#555]">
      <div className="flex items-center">
        <span className="font-['Open_Sans',sans-serif]">Enter</span>
        <svg className="ml-[18px]" width="12" height="12" viewBox="0 0 12 12" fill="none" stroke="#555">
          <circle cx="5" cy="2" r="1.500" />
          <path d="M0.500 4l3 1v3l-1.500 3.500M10 4L6.500 5v2M8 8l3 3M11 8l-3 3" />
        </svg>
        <span className="ml-[3px] font-['Open_Sans',sans-serif] font-semibold text-[#333]">Accessibility: Investigate</span>
      </div>
      <div className="flex items-center gap-1 pr-[2px] text-[#bbb]">
        <button type="button" aria-label="Zoom out">−</button>
        <input
          type="range"
          aria-label="Zoom"
          min={10}
          max={190}
          defaultValue={100}
          className="h-px w-[84px] appearance-none bg-[#888] [&::-webkit-slider-thumb]:h-[7px] [&::-webkit-slider-thumb]:w-px [&::-webkit-slider-thumb]:appearance-none [&::-webkit-slider-thumb]:bg-[#555]"
        />
        <button type="button" aria-label="Zoom in">+</button>
        <span className="ml-[6px]">100%</span>
      </div>
    </div>
  );
}

function Key({ main, shift, label, icon, width, dim, name }: KeyDef) {
  return (
    <button
      type="button"
      aria-label={name}
      className={clsx('flex h-[43px] min-w-0 items-start overflow-hidden bg-[#333] pl-[3px] text-left', width ? clsx(width, 'shrink-0') : 'flex-1', dim ? 'text-[#777]' : 'text-[#f0f0f0]')}
    >
      {label && <span className="text-[13px] leading-[19px]">{label}</span>}
      {icon && <span className="pt-[3px]">{icon}</span>}
      {main && !shift && <span className="pl-px text-[18px] leading-[22px]">{main}</span>}
      {shift && (
        <>
          <span className="w-[22px] text-[16px] leading-6 text-[#7a7a7a]">{shift}</span>
          <span className="pt-[16px] text-[18px] leading-6">{main}</span>
        </>
      )}
    </button>
  );
}

function OnScreenKeyboard() {
  return (
    <div className="absolute top-[436px] right-[138px] left-[122px] z-10 flex h-[259px] flex-col overflow-hidden rounded-t-lg border-t border-[#ccc] shadow-[0_0_10px_#0004]">
      <div className="flex h-[25px] shrink-0 items-center bg-[#f4f4f4] pr-[16px] pl-[6px] text-[10px] text-[#8a8a8a]">
        <svg width="14" height="13" viewBox="0 0 14 13">
          <path fill="#2d5366" d="M3 4h11v8a1 1 0 01-1 1H5a2 2 0 01-2-2z" />
          <path fill="#1fa3b8" d="M0 1h11v9H1a1 1 0 01-1-1z" />
          <path fill="#55cfdb" d="M0 1h11v3H0z" />
        </svg>
        <span className="ml-1 flex-1">On-Screen Keyboard</span>
        <IconButton name="Minimize keyboard" className="mr-[69px]">
          <svg width="9" height="9" viewBox="0 0 9 9" stroke="#555"><path d="M0 3.500h9" /></svg>
        </IconButton>
        <IconButton name="Close keyboard">
          <svg width="9" height="9" viewBox="0 0 9 9" stroke="#999"><path d="M0.500 0.500l8 8M8.500 0.500l-8 8" /></svg>
        </IconButton>
      </div>
      <div className="flex flex-1 overflow-hidden bg-[#1a1a1a] px-[3px] pt-12">
        <div className="flex flex-1 flex-col gap-[2px]">
          {keyRows.map((row, r) => (
            <div key={r} className="flex gap-[2px]">
              {row.map((def, k) => (
                <Key key={k} {...def} />
              ))}
            </div>
          ))}
        </div>
        <div className="ml-2 flex flex-col gap-[2px]">
          {sideRows.map(([first, second, third]) => (
            <div key={first} className="flex gap-[2px]">
              <Key label={first} width="w-[47px]" />
              <Key label={second} width="w-[48px]" />
              <span className="w-px" />
              <Key label={third} width="w-[47px]" dim={third === 'Dock'} />
            </div>
          ))}
        </div>
      </div>
    </div>
  );
}

function Pointer() {
  return (
    <div className="pointer-events-none absolute top-[427px] right-[207px] z-20 flex size-[47px] items-center justify-center rounded-full border-3 border-[#dde63c]">
      <svg className="mt-2 ml-2" width="9" height="13" viewBox="0 0 9 13" fill="#fff" stroke="#333">
        <path d="M0.500 0.500v10.500l2.500-2.500 1.500 4 1.500-0.500-1.500-4h3.500z" />
      </svg>
    </div>
  );
}

export default function App() {
  return (
    <div className="relative h-screen overflow-hidden bg-black pt-6 pr-[2px] pb-[25px] pl-px font-['Noto_Sans',sans-serif]">
      <div className="flex h-full flex-col overflow-hidden bg-[#e7eeef]">
        <TitleBar />
        <TabRow />
        <Ribbon />
        <FormulaBar />
        <Worksheet />
        <SheetBar />
        <StatusBar />
      </div>
      <OnScreenKeyboard />
      <Pointer />
    </div>
  );
}
